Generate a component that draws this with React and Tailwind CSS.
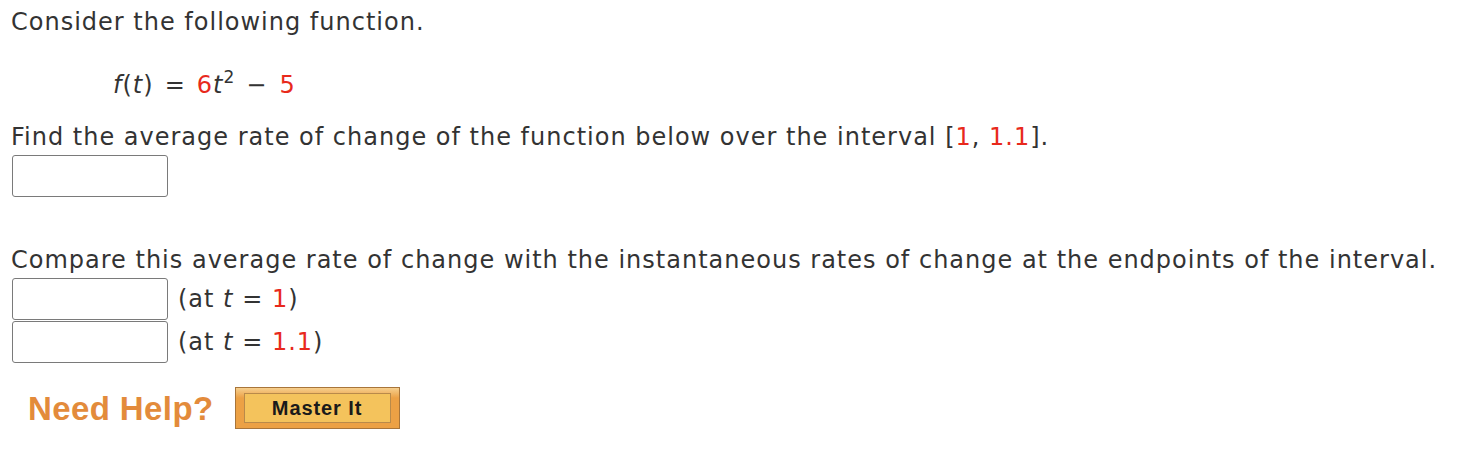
import React from "react"

const Red = ({ children }) => <span className="text-[#e8291c]">{children}</span>

const AnswerBox = () => (
  <div className="w-[156px] h-[42px] border-[1.5px] border-[#7a7a7a] rounded-[3px] bg-white shrink-0" />
)

const App = () => {
  return (
    <div className="w-[1460px] h-[472px] bg-white text-[#333333] text-[24px] leading-[28px] tracking-[1px] px-[11px] font-['DejaVu_Sans',Verdana,sans-serif]">
      <p className="pt-[8px]">Consider the following function.</p>

      <p className="mt-[35px] pl-[102px] flex items-baseline">
        <i>f</i>(<i>t</i>)<span className="mx-[11px]">=</span>
        <Red>6</Red>
        <i>t</i>
        <sup className="text-[17px] relative top-[-10px]">2</sup>
        <span className="ml-[11px] mr-[12px]">−</span>
        <Red>5</Red>
      </p>

      <p className="mt-[24px]">
        Find the average rate of change of the function below over the interval [<Red>1</Red>, <Red>1.1</Red>].
      </p>
      <div className="mt-[4px] pl-px">
        <AnswerBox />
      </div>

      <p className="mt-[49px]">
        Compare this average rate of change with the instantaneous rates of change at the endpoints of the interval.
      </p>
      <div className="mt-[4px] pl-px flex flex-col gap-px">
        <div className="flex items-center gap-[10px]">
          <AnswerBox />
          <span>
            (at <i>t</i> = <Red>1</Red>)
          </span>
        </div>
        <div className="flex items-center gap-[10px]">
          <AnswerBox />
          <span>
            (at <i>t</i> = <Red>1.1</Red>)
          </span>
        </div>
      </div>

      <div className="mt-[24px] pl-[17px] flex items-center gap-[21px] tracking-normal font-['Liberation_Sans',Arial,sans-serif]">
        <span className="text-[33px] font-bold text-[#e38b3b] leading-none tracking-[0.4px]">Need Help?</span>
        <button className="w-[165px] h-[42px] bg-[linear-gradient(#f6cf8e,#eca145_25%,#eca145)] border border-[#a8753a] px-[8px] py-[5px]">
          <div className="w-full h-full bg-[#f4c35c] border border-[#b98a4a] flex items-center justify-center text-[20px] font-bold text-[#1a1a1a] tracking-[0.9px]">
            Master It
          </div>
        </button>
      </div>
    </div>
  )
}

export default App
